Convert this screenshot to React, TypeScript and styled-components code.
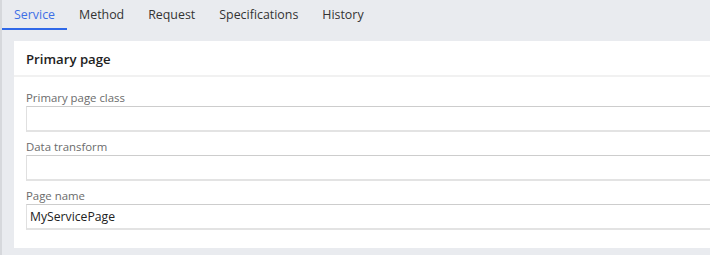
import React from "react";
import styled, { createGlobalStyle } from "styled-components";

const Global = createGlobalStyle`
  html, body { margin: 0; padding: 0; }
  body {
    background: #e9ebef;
    font-family: "Open Sans", "Noto Sans", sans-serif;
    width: 710px;
    height: 255px;
    overflow: hidden;
  }
`;

const Page = styled.div`
  height: 255px;
  box-sizing: border-box;
  border-left: 2px solid #d6d8dc;
  display: flex;
  flex-direction: column;
`;

const TabBar = styled.div`
  display: flex;
  height: 30px;
  align-items: stretch;
`;

const Tab = styled.div<{ $active?: boolean }>`
  padding: 2px 12px 0;
  font-size: 12.4px;
  color: ${(p) => (p.$active ? "#3d6fe6" : "#333")};
  border-bottom: 2px solid ${(p) => (p.$active ? "#2f68e8" : "transparent")};
  box-sizing: border-box;
  height: 30px;
  line-height: 26px;
`;

const Card = styled.div`
  margin: 11px 0 0 12px;
  background: #fff;
  height: 207px;
  display: flex;
  flex-direction: column;
`;

const CardHeader = styled.div`
  height: 36px;
  box-sizing: border-box;
  padding: 1px 12px 0;
  display: flex;
  align-items: center;
  font-size: 13.2px;
  font-weight: 600;
  color: #222;
  border-bottom: 2px solid #f1f1f1;
`;

const Body = styled.div`
  padding: 12px 0 0 12px;
  display: flex;
  flex-direction: column;
  gap: 6px;
`;

const Field = styled.div`
  display: flex;
  flex-direction: column;
`;

const Label = styled.label`
  font-size: 11.4px;
  color: #6b6b6b;
  height: 17px;
  line-height: 17px;
`;

const Input = styled.div`
  height: 26px;
  box-sizing: border-box;
  border: 1px solid #e0e0e0;
  border-top-color: #cdcdcd;
  border-bottom: 2px solid #e3e3e3;
  border-right: none;
  font-size: 12.2px;
  color: #222;
  padding: 0 3px;
  display: flex;
  align-items: center;
`;

export default function App() {
  const tabs = ["Service", "Method", "Request", "Specifications", "History"];
  const fields = [
    { label: "Primary page class", value: "" },
    { label: "Data transform", value: "" },
    { label: "Page name", value: "MyServicePage" },
  ];
  return (
    <>
      <Global />
      <Page>
        <TabBar>
          {tabs.map((t, i) => (
            <Tab key={t} $active={i === 0}>
              {t}
            </Tab>
          ))}
        </TabBar>
        <Card>
          <CardHeader>Primary page</CardHeader>
          <Body>
            {fields.map((f) => (
              <Field key={f.label}>
                <Label>{f.label}</Label>
                <Input>{f.value}</Input>
              </Field>
            ))}
          </Body>
        </Card>
      </Page>
    </>
  );
}
